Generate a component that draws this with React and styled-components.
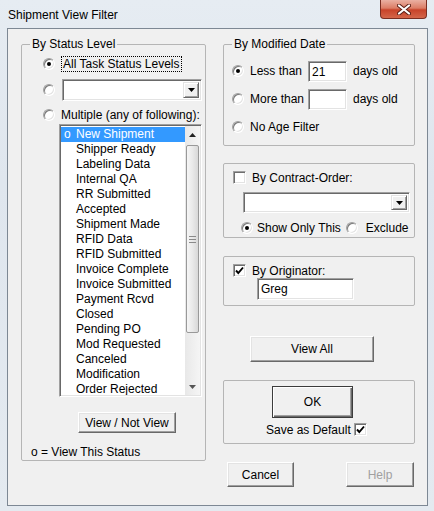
import React from "react";
import styled, { createGlobalStyle } from "styled-components";

const GlobalStyle = createGlobalStyle`
  html, body { margin: 0; padding: 0; }
  body {
    width: 434px;
    height: 511px;
    overflow: hidden;
    font-family: "Liberation Sans", Arial, sans-serif;
    font-size: 12px;
    color: #000;
  }
  * { box-sizing: border-box; }
`;

const Window = styled.div`
  width: 434px;
  height: 511px;
  display: flex;
  flex-direction: column;
  background: linear-gradient(180deg, #e6ecf2 0%, #dfe6ee 35%, #e4eaf0 100%);
`;

const TitleBar = styled.div`
  height: 28px;
  flex: none;
  display: flex;
  align-items: flex-start;
  justify-content: space-between;
  padding-left: 8px;
`;

const Title = styled.div`
  margin-top: 8px;
  line-height: 14px;
  font-size: 12px;
`;

const CloseButton = styled.div`
  width: 47px;
  height: 19px;
  margin-right: 7px;
  border: 1px solid #7a2e22;
  border-top: none;
  border-radius: 0 0 4px 4px;
  background: linear-gradient(180deg, #eab0a2 0%, #dc7d66 45%, #c8432a 55%, #d4664a 100%);
  display: flex;
  align-items: center;
  justify-content: center;
`;

const Client = styled.div`
  flex: 1;
  margin: 0 6px 5px 7px;
  border: 1px solid #7d8894;
  background: #f0f0f0;
  display: flex;
  align-items: flex-start;
  gap: 17px;
  padding: 8px 12px 0 13px;
`;

const Group = styled.fieldset`
  margin: 0;
  padding: 0;
  min-width: 0;
  width: ${(p) => p.$width}px;
  border: 1px solid #b5b5b5;
  border-radius: 2px;
`;

const Legend = styled.legend`
  margin-left: 8px;
  padding: 0 2px;
  line-height: 14px;
  font-size: 12px;
`;

const GroupBody = styled.div`
  display: flex;
  flex-direction: column;
  align-items: flex-start;
  padding: ${(p) => p.$pad};
`;

const Panel = styled.div`
  width: 192px;
  margin-top: ${(p) => p.$top}px;
  border: 1px solid #b5b5b5;
  border-radius: 2px;
  display: flex;
  flex-direction: column;
  align-items: flex-start;
  padding: ${(p) => p.$pad};
`;

const RightColumn = styled.div`
  width: 192px;
  display: flex;
  flex-direction: column;
  align-items: flex-start;
`;

const Row = styled.div`
  display: flex;
  align-items: center;
  height: ${(p) => p.$h}px;
  margin-top: ${(p) => p.$top || 0}px;
  margin-left: ${(p) => p.$left || 0}px;
  gap: ${(p) => (p.$gap === undefined ? 6 : p.$gap)}px;
`;

const Radio = styled.span`
  flex: none;
  width: 12px;
  height: 12px;
  margin-left: ${(p) => p.$left || 0}px;
  border-radius: 50%;
  border: 1px solid;
  border-color: #a0a0a0 #ffffff #ffffff #a0a0a0;
  box-shadow: inset 1px 1px 0 #7a7a7a, inset -1px -1px 0 #e3e3e3;
  background: #fff;
  display: flex;
  align-items: center;
  justify-content: center;
  &::after {
    content: "";
    width: 4px;
    height: 4px;
    border-radius: 50%;
    background: ${(p) => (p.$checked ? "#000" : "transparent")};
  }
`;

const CheckBox = styled.span`
  flex: none;
  width: 13px;
  height: 13px;
  border: 1px solid;
  border-color: #a0a0a0 #ffffff #ffffff #a0a0a0;
  box-shadow: inset 1px 1px 0 #6e6e6e, inset -1px -1px 0 #e3e3e3;
  background: #fff;
  display: flex;
  align-items: center;
  justify-content: center;
`;

const Label = styled.span`
  white-space: nowrap;
  line-height: 14px;
  flex: none;
  margin-left: ${(p) => p.$left || 0}px;
  width: ${(p) => (p.$width ? `${p.$width}px` : "auto")};
  ${(p) => p.$focus && `padding: 0 1px; border: 1px dotted #000;`}
`;

const Field = styled.div`
  width: ${(p) => p.$width}px;
  height: ${(p) => p.$height}px;
  margin-top: ${(p) => p.$top || 0}px;
  margin-left: ${(p) => p.$left || 0}px;
  border: 1px solid;
  border-color: #a0a0a0 #ffffff #ffffff #a0a0a0;
  box-shadow: inset 1px 1px 0 #696969, inset -1px -1px 0 #e3e3e3;
  background: #fff;
  padding: 2px 3px;
  line-height: 16px;
  flex: none;
`;

const Combo = styled(Field)`
  display: flex;
  justify-content: flex-end;
  padding: 2px;
`;

const DropButton = styled.div`
  width: 16px;
  height: 100%;
  background: #f0f0f0;
  border: 1px solid;
  border-color: #e3e3e3 #696969 #696969 #e3e3e3;
  box-shadow: inset 1px 1px 0 #fff, inset -1px -1px 0 #a0a0a0;
  display: flex;
  align-items: center;
  justify-content: center;
`;

const Button = styled.button`
  width: ${(p) => p.$width}px;
  height: ${(p) => p.$height}px;
  margin-top: ${(p) => p.$top || 0}px;
  margin-left: ${(p) => p.$left || 0}px;
  padding: 0;
  flex: none;
  font-family: "Liberation Sans", Arial, sans-serif;
  font-size: 12px;
  color: ${(p) => (p.disabled ? "#a0a0a0" : "#000")};
  background: #f0f0f0;
  border: 1px solid;
  border-color: #ffffff #696969 #696969 #ffffff;
  box-shadow: inset -1px -1px 0 #a0a0a0, inset 1px 1px 0 #e3e3e3;
  ${(p) =>
    p.$default &&
    `
    border: 1px solid #3c3c3c;
    box-shadow: inset 1px 1px 0 #fff, inset -1px -1px 0 #696969, inset -2px -2px 0 #a0a0a0;
  `}
`;

const ListBox = styled.div`
  width: 143px;
  height: 273px;
  margin-top: 1px;
  margin-left: 28px;
  border: 1px solid;
  border-color: #a0a0a0 #ffffff #ffffff #a0a0a0;
  box-shadow: inset 1px 1px 0 #696969, inset -1px -1px 0 #e3e3e3;
  background: #fff;
  padding: 1px;
  display: flex;
  flex: none;
`;

const ListItems = styled.div`
  flex: 1;
  overflow: hidden;
  padding-top: 1px;
`;

const Item = styled.div`
  height: 15px;
  line-height: 14px;
  display: flex;
  padding-left: 3px;
  white-space: nowrap;
  background: ${(p) => (p.$selected ? "#3399ff" : "transparent")};
  color: ${(p) => (p.$selected ? "#fff" : "#000")};
`;

const Marker = styled.span`
  width: 12px;
  flex: none;
`;

const ScrollBar = styled.div`
  width: 15px;
  flex: none;
  display: flex;
  flex-direction: column;
  background: linear-gradient(90deg, #e8e8e8, #f5f5f5);
`;

const ScrollArrow = styled.div`
  height: 17px;
  flex: none;
  display: flex;
  align-items: center;
  justify-content: center;
`;

const Track = styled.div`
  flex: 1;
  padding: 2px 1px 0 1px;
`;

const Thumb = styled.div`
  height: 188px;
  border: 1px solid #999;
  border-radius: 2px;
  background: linear-gradient(90deg, #f6f6f6 0%, #e9e9e9 50%, #d8d8d8 100%);
  display: flex;
  align-items: center;
  justify-content: center;
`;

const Note = styled.div`
  margin-top: 13px;
  line-height: 13px;
`;

const ButtonRow = styled.div`
  width: 100%;
  margin-top: 18px;
  display: flex;
  justify-content: space-between;
  padding: 0 1px 0 4px;
`;

const statuses = [
  "New Shipment",
  "Shipper Ready",
  "Labeling Data",
  "Internal QA",
  "RR Submitted",
  "Accepted",
  "Shipment Made",
  "RFID Data",
  "RFID Submitted",
  "Invoice Complete",
  "Invoice Submitted",
  "Payment Rcvd",
  "Closed",
  "Pending PO",
  "Mod Requested",
  "Canceled",
  "Modification",
  "Order Rejected",
];

const Arrow = ({ up, color = "#000" }) => (
  <svg width="7" height="4" viewBox="0 0 7 4">
    <path d={up ? "M0 4 L3.5 0 L7 4 Z" : "M0 0 L3.5 4 L7 0 Z"} fill={color} />
  </svg>
);

const Tick = () => (
  <svg width="9" height="9" viewBox="0 0 9 9">
    <polyline points="1,4.5 3.3,7 8,1.5" fill="none" stroke="#000" strokeWidth="1.9" />
  </svg>
);

const Grip = () => (
  <svg width="7" height="7" viewBox="0 0 7 7">
    <path d="M0 0.5 H7 M0 3.5 H7 M0 6.5 H7" stroke="#8a8a8a" strokeWidth="1" />
  </svg>
);

const CloseGlyph = () => (
  <svg width="14" height="11" viewBox="0 0 14 11">
    <path d="M2 1.5 L12 9.5 M12 1.5 L2 9.5" stroke="#5a1d14" strokeWidth="4" strokeLinecap="round" />
    <path d="M2 1.5 L12 9.5 M12 1.5 L2 9.5" stroke="#fff" strokeWidth="2.2" strokeLinecap="round" />
  </svg>
);

const DropDown = ({ width, height, top, left }) => (
  <Combo $width={width} $height={height} $top={top} $left={left}>
    <DropButton>
      <Arrow />
    </DropButton>
  </Combo>
);

export default function App() {
  return (
    <>
      <GlobalStyle />
      <Window>
        <TitleBar>
          <Title>Shipment View Filter</Title>
          <CloseButton>
            <CloseGlyph />
          </CloseButton>
        </TitleBar>
        <Client>
          <Group $width={185}>
            <Legend>By Status Level</Legend>
            <GroupBody $pad="5px 2px 1px 9px">
              <Row $h={16} $left={12}>
                <Radio $checked />
                <Label $focus>All Task Status Levels</Label>
              </Row>
              <Row $h={22} $top={7} $left={12} $gap={7}>
                <Radio />
                <DropDown width={140} height={22} />
              </Row>
              <Row $h={16} $top={6} $left={12}>
                <Radio />
                <Label>Multiple (any of following):</Label>
              </Row>
              <ListBox>
                <ListItems>
                  {statuses.map((s, i) => (
                    <Item key={s} $selected={i === 0}>
                      <Marker>{i === 0 ? "o" : ""}</Marker>
                      {s}
                    </Item>
                  ))}
                </ListItems>
                <ScrollBar>
                  <ScrollArrow>
                    <Arrow up color="#222" />
                  </ScrollArrow>
                  <Track>
                    <Thumb>
                      <Grip />
                    </Thumb>
                  </Track>
                  <ScrollArrow>
                    <Arrow color="#555" />
                  </ScrollArrow>
                </ScrollBar>
              </ListBox>
              <Button $width={98} $height={21} $top={15} $left={47}>
                View / Not View
              </Button>
              <Note>o = View This Status</Note>
            </GroupBody>
          </Group>

          <RightColumn>
            <Group $width={192}>
              <Legend>By Modified Date</Legend>
              <GroupBody $pad="9px 2px 10px 8px">
                <Row $h={22}>
                  <Radio $checked />
                  <Label $width={52}>Less than</Label>
                  <Field $width={39} $height={21}>21</Field>
                  <Label>days old</Label>
                </Row>
                <Row $h={22} $top={6}>
                  <Radio />
                  <Label $width={52}>More than</Label>
                  <Field $width={39} $height={21} />
                  <Label>days old</Label>
                </Row>
                <Row $h={16} $top={9}>
                  <Radio />
                  <Label>No Age Filter</Label>
                </Row>
              </GroupBody>
            </Group>

            <Panel $top={17} $pad="7px 3px 2px 9px">
              <Row $h={13} $gap={6}>
                <CheckBox />
                <Label>By Contract-Order:</Label>
              </Row>
              <DropDown width={167} height={21} top={8} left={10} />
              <Row $h={14} $top={8} $left={8} $gap={4}>
                <Radio $checked />
                <Label>Show Only This</Label>
                <Radio $left={1} />
                <Label $left={4}>Exclude</Label>
              </Row>
            </Panel>

            <Panel $top={18} $pad="7px 3px 5px 9px">
              <Row $h={13} $gap={6}>
                <CheckBox>
                  <Tick />
                </CheckBox>
                <Label>By Originator:</Label>
              </Row>
              <Field $width={97} $height={22} $top={1} $left={24}>
                Greg
              </Field>
            </Panel>

            <Button $width={124} $height={26} $top={30} $left={27}>
              View All
            </Button>

            <Panel $top={18} $pad="5px 3px 7px 0">
              <Button $default $width={81} $height={32} $left={48}>
                OK
              </Button>
              <Row $h={13} $top={5} $left={42} $gap={3}>
                <Label>Save as Default</Label>
                <CheckBox>
                  <Tick />
                </CheckBox>
              </Row>
            </Panel>

            <ButtonRow>
              <Button $width={67} $height={25}>
                Cancel
              </Button>
              <Button $width={68} $height={25} disabled>
                Help
              </Button>
            </ButtonRow>
          </RightColumn>
        </Client>
      </Window>
    </>
  );
}
